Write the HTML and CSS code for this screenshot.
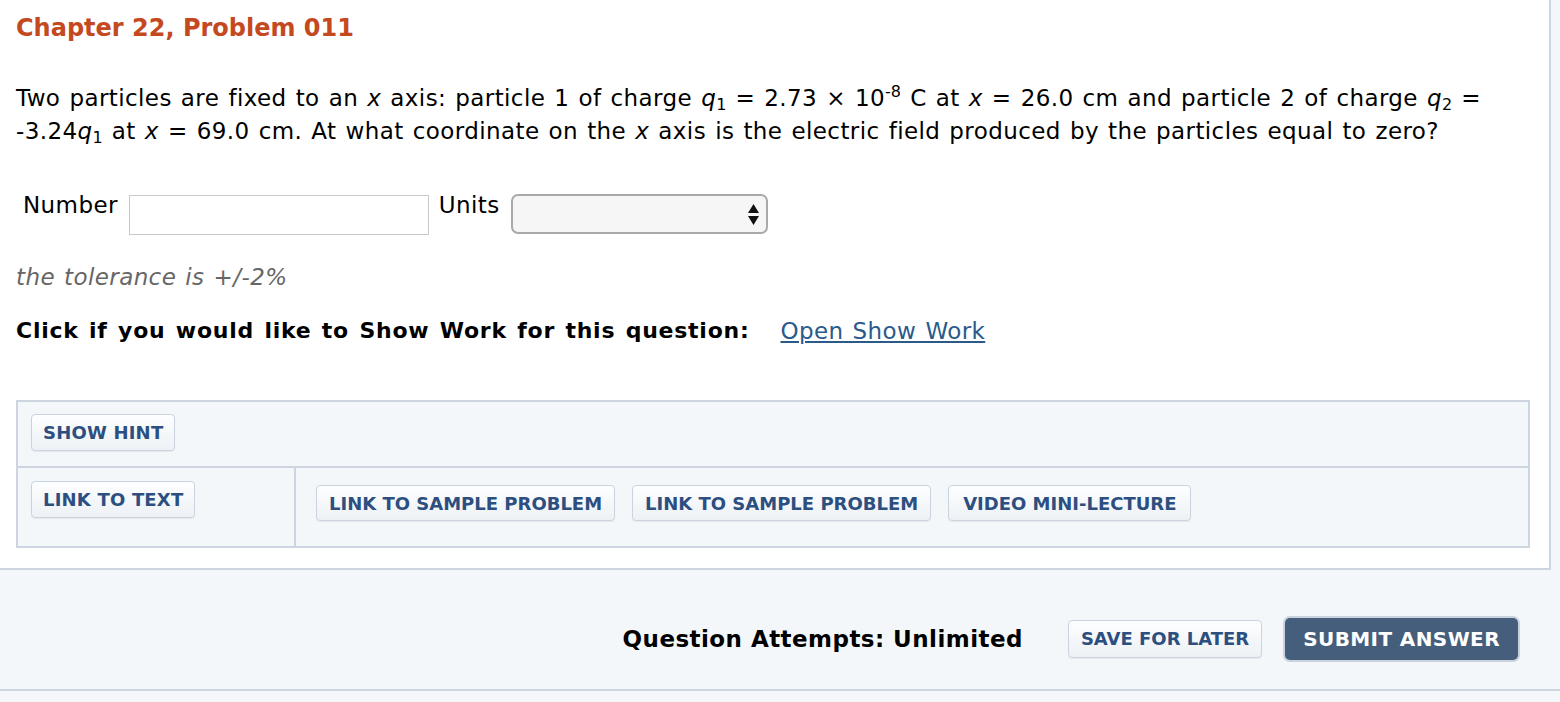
FILE: index.html
```html
<!DOCTYPE html>
<html>
<head>
<meta charset="utf-8">
<link rel="stylesheet" href="styles.css">
</head>
<body>
<div class="card">
  <h1 class="title">Chapter 22, Problem 011</h1>
  <p class="question">Two particles are fixed to an <i>x</i> axis: particle 1 of charge <i>q</i><sub>1</sub> = 2.73 × 10<sup>-8</sup> C at <i>x</i> = 26.0 cm and particle 2 of charge <i>q</i><sub>2</sub> =<br>-3.24<i>q</i><sub>1</sub> at <i>x</i> = 69.0 cm. At what coordinate on the <i>x</i> axis is the electric field produced by the particles equal to zero?</p>
  <div class="answer-row">
    <span class="lbl lbl-number">Number</span>
    <span class="num-input"></span>
    <span class="lbl lbl-units">Units</span>
    <span class="select">
      <svg class="arrows" width="11" height="21" viewBox="0 0 11 21"><path d="M5.5 0 L11 9 H0 Z M0 12 H11 L5.5 21 Z" fill="#111"/></svg>
    </span>
  </div>
  <p class="tolerance">the tolerance is +/-2%</p>
  <div class="showwork">
    <span class="sw-label">Click if you would like to Show Work for this question:</span>
    <a class="sw-link" href="#">Open Show Work</a>
  </div>
  <div class="hints">
    <div class="hint-row">
      <span class="btn">SHOW HINT</span>
    </div>
    <div class="link-row">
      <div class="link-left"><span class="btn">LINK TO TEXT</span></div>
      <div class="link-right">
        <span class="btn btn-narrow">LINK TO SAMPLE PROBLEM</span>
        <span class="btn btn-narrow">LINK TO SAMPLE PROBLEM</span>
        <span class="btn btn-narrow btn-video">VIDEO MINI-LECTURE</span>
      </div>
    </div>
  </div>
</div>
<div class="footer">
  <span class="attempts">Question Attempts: Unlimited</span>
  <span class="btn btn-save">SAVE FOR LATER</span>
  <span class="btn-submit">SUBMIT ANSWER</span>
</div>
</body>
</html>
```

FILE: styles.css
```css
html, body {
  margin: 0;
  padding: 0;
}
body {
  background: #f4f7fa;
  font-family: "DejaVu Sans", Verdana, sans-serif;
  color: #000;
  width: 1560px;
  height: 702px;
  overflow: hidden;
}
.card {
  background: #fff;
  width: 1533px;
  padding: 15px 0 20px 16px;
  border-right: 2px solid #cdd6e0;
  border-bottom: 2px solid #cdd6e0;
}
.title {
  margin: 0;
  font-size: 24px;
  line-height: 27px;
  font-weight: bold;
  letter-spacing: 0;
  color: #c4491f;
}
.question {
  margin: 40px 0 0;
  font-size: 23px;
  line-height: 33px;
  letter-spacing: 0.4px;
  word-spacing: 1.4px;
}
.question sub, .question sup {
  font-size: 16px;
  line-height: 0;
  letter-spacing: 0;
}
.question sub { vertical-align: -4px; }
.question sup { vertical-align: 9px; }
.answer-row {
  margin-top: 46px;
  display: flex;
  align-items: flex-start;
  height: 41px;
}
.lbl {
  font-size: 23px;
  line-height: 24px;
  letter-spacing: 0.4px;
  margin-top: -1px;
}
.lbl-number { margin-left: 7px; margin-right: 11px; }
.lbl-units { margin-left: 10px; margin-right: 11px; }
.num-input {
  display: block;
  width: 298px;
  height: 38px;
  border: 1px solid #c8c8c8;
  margin-top: 1px;
  background: #fff;
}
.select {
  display: flex;
  align-items: center;
  justify-content: flex-end;
  box-sizing: border-box;
  width: 257px;
  height: 40px;
  border: 2px solid #a9a9a9;
  border-radius: 7px;
  background: #f6f6f6;
  padding-right: 7px;
}
.tolerance {
  margin: 29px 0 0;
  font-size: 23px;
  line-height: 26px;
  font-style: italic;
  color: #666;
  letter-spacing: 0.4px;
  word-spacing: 1.4px;
}
.showwork {
  margin-top: 28px;
  display: flex;
  align-items: center;
  line-height: 26px;
}
.sw-label {
  font-size: 22px;
  font-weight: bold;
  letter-spacing: 0.75px;
  word-spacing: 2px;
}
.sw-link {
  margin-left: 31px;
  font-size: 23px;
  color: #2a5a8a;
  text-decoration: underline;
  letter-spacing: 0.4px;
  word-spacing: 1.4px;
}
.hints {
  margin-top: 56px;
  width: 1510px;
  border: 2px solid #cdd6e0;
  background: #f4f7fa;
}
.hint-row {
  height: 52px;
  padding: 12px 0 0 13px;
  border-bottom: 2px solid #cdd6e0;
}
.link-row {
  display: flex;
  height: 78px;
}
.link-left {
  width: 263px;
  padding: 13px 0 0 13px;
  border-right: 2px solid #cdd6e0;
}
.link-right {
  display: flex;
  gap: 17px;
  padding: 17px 0 0 20px;
  align-items: flex-start;
}
.btn {
  display: inline-flex;
  align-items: center;
  box-sizing: border-box;
  height: 37px;
  padding: 0 11px;
  border: 1px solid #cbd4de;
  border-radius: 4px;
  background: linear-gradient(#fdfeff, #edf1f5);
  box-shadow: 0 1px 1px rgba(0, 0, 0, 0.06);
  color: #2c4f80;
  font-size: 18px;
  font-weight: bold;
  letter-spacing: 0.2px;
  white-space: nowrap;
}
.btn-narrow {
  height: 36px;
  padding: 0 12px;
  letter-spacing: 0;
}
.btn-video {
  padding: 0 14px;
}
.footer {
  box-sizing: border-box;
  height: 121px;
  padding: 18px 42px 0 0;
  border-bottom: 2px solid #cdd6e0;
  display: flex;
  align-items: center;
  justify-content: flex-end;
}
.attempts {
  font-size: 23px;
  font-weight: bold;
  letter-spacing: 0.45px;
  margin-right: 45px;
}
.btn-save {
  height: 38px;
  padding: 0 12px;
  font-size: 18px;
  letter-spacing: 0;
  margin-right: 23px;
}
.btn-submit {
  display: inline-flex;
  align-items: center;
  box-sizing: border-box;
  height: 42px;
  padding: 0 18px;
  background: #445e7b;
  color: #fff;
  border-radius: 5px;
  box-shadow: 0 0 0 2px #c9d3de;
  font-size: 20px;
  font-weight: bold;
  letter-spacing: 0.4px;
  white-space: nowrap;
}
```
